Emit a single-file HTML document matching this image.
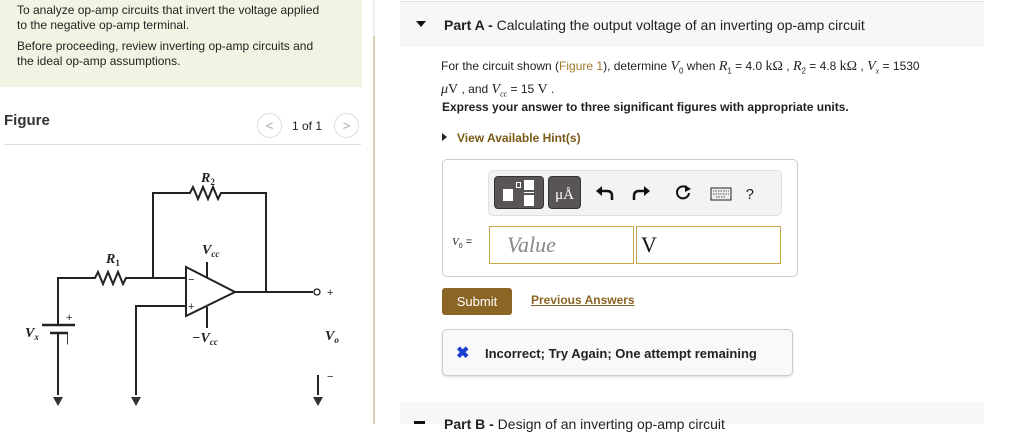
<!DOCTYPE html>
<html><head><meta charset="utf-8">
<style>
*{margin:0;padding:0;box-sizing:border-box}
body{width:1024px;height:424px;overflow:hidden;background:#fff;font-family:"Liberation Sans",Arial,sans-serif;color:#222;position:relative}
.abs{position:absolute}
.intro{left:0;top:0;width:362px;height:87px;background:#f3f3e3;font-size:12px;line-height:15px;padding:3px 0 0 17px;color:#222}
.intro p{margin-bottom:6px}
.serif{font-family:"Liberation Serif",serif;font-style:italic}
</style></head><body>
<div class="abs intro"><p>To analyze op-amp circuits that invert the voltage applied<br>to the negative op-amp terminal.</p><p>Before proceeding, review inverting op-amp circuits and<br>the ideal op-amp assumptions.</p></div>
<div class="abs" style="left:4px;top:112px;font-size:15px;font-weight:bold;color:#333">Figure</div>
<div class="abs" style="left:257px;top:113px;width:25px;height:25px;border:1px solid #ddd;border-radius:50%;color:#aaa;font-size:13px;text-align:center;line-height:23px">&lt;</div>
<div class="abs" style="left:292px;top:119px;font-size:12px;color:#222">1 of 1</div>
<div class="abs" style="left:334px;top:113px;width:25px;height:25px;border:1px solid #ddd;border-radius:50%;color:#aaa;font-size:13px;text-align:center;line-height:23px">&gt;</div>
<div class="abs" style="left:4px;top:144px;width:357px;height:1px;background:#ddd"></div>
<div class="abs" style="left:373px;top:0;width:2px;height:36px;background:#eee"></div>
<div class="abs" style="left:373px;top:36px;width:2px;height:388px;background:#dccdb5"></div>

<svg class="abs" style="left:0;top:150px" width="370" height="274" viewBox="0 150 370 274">
<g fill="none" stroke="#222" stroke-width="2">
<path d="M153 278V193H190l3-6 5 12 5-12 5 12 5-12 5 12 3-6H266V292"/>
<path d="M58 325V278H95l3-6 5 12 5-12 5 12 5-12 5 12 3-6H186"/>
<path d="M186 267V316L235 292Z"/>
<path d="M235 292H313"/>
<path d="M136 395V306H186"/>
<path d="M207 262V278M207 307V328"/>
<path d="M58 333V395M318 375V395"/>
<path d="M42 325H75" stroke-width="2.5"/><path d="M50 333H68" stroke-width="2.5"/>
</g>
<circle cx="317" cy="292" r="3" fill="#fff" stroke="#222" stroke-width="1.3"/>
<g fill="#333"><path d="M53 397H63L58 406Z"/><path d="M131 397H141L136 406Z"/><path d="M313 397H323L318 406Z"/></g>
<g font-family="Liberation Serif,serif" font-style="italic" font-weight="bold" font-size="14" fill="#222">
<text x="201" y="182">R<tspan font-size="9" dy="3" font-style="normal">2</tspan></text>
<text x="106" y="263">R<tspan font-size="9" dy="3" font-style="normal">1</tspan></text>
<text x="202" y="254">V<tspan font-size="9" dy="3">cc</tspan></text>
<text x="192" y="342">−V<tspan font-size="9" dy="3">cc</tspan></text>
<text x="25" y="337">V<tspan font-size="9" dy="3">x</tspan></text>
<text x="325" y="340">V<tspan font-size="9" dy="3">o</tspan></text>
</g>
<g font-family="Liberation Sans,sans-serif" font-size="11" fill="#222">
<text x="188" y="283">−</text><text x="188" y="310">+</text>
<text x="66" y="321">+</text><text x="66" y="342">|</text>
<text x="327" y="296">+</text><text x="327" y="380">−</text>
</g>
</svg>

<div class="abs" style="left:400px;top:1px;width:584px;height:1px;background:#e4e4e4"></div>
<div class="abs" style="left:400px;top:2px;width:584px;height:45px;background:#f7f7f7"></div>
<div class="abs" style="left:416px;top:21px;width:0;height:0;border-left:5px solid transparent;border-right:5px solid transparent;border-top:6px solid #111"></div>
<div class="abs" style="left:444px;top:17px;font-size:14px;color:#222"><b>Part A -</b> Calculating the output voltage of an inverting op-amp circuit</div>
<div class="abs" style="left:441px;top:57px;font-size:12px;line-height:19px;color:#222;width:545px">For the circuit shown (<span style="color:#a0782a">Figure 1</span>), determine <span class="serif" style="font-size:14px">V</span><sub style="font-size:8px">0</sub> when <span class="serif" style="font-size:14px">R</span><sub style="font-size:8px">1</sub> = 4.0 <span style="font-family:'Liberation Serif',serif;font-size:14px">kΩ</span> , <span class="serif" style="font-size:14px">R</span><sub style="font-size:8px">2</sub> = 4.8 <span style="font-family:'Liberation Serif',serif;font-size:14px">kΩ</span> , <span class="serif" style="font-size:14px">V</span><sub style="font-size:8px" class="serif">x</sub> = 1530<br><span style="font-family:'Liberation Serif',serif;font-size:14px"><i>μ</i>V</span> , and <span class="serif" style="font-size:14px">V</span><sub style="font-size:8px" class="serif">cc</sub> = 15 <span style="font-family:'Liberation Serif',serif;font-size:14px">V</span> .</div>
<div class="abs" style="left:442px;top:100px;font-size:12px;font-weight:bold;color:#222">Express your answer to three significant figures with appropriate units.</div>
<div class="abs" style="left:442px;top:133px;width:0;height:0;border-top:4px solid transparent;border-bottom:4px solid transparent;border-left:5px solid #222"></div>
<div class="abs" style="left:457px;top:131px;font-size:12px;font-weight:bold;color:#7a5a16">View Available Hint(s)</div>

<div class="abs" style="left:442px;top:159px;width:356px;height:118px;border:1px solid #ccc;border-radius:5px;background:#fff"></div>
<div class="abs" style="left:488px;top:170px;width:294px;height:46px;border:1px solid #e0e0e0;border-radius:5px;background:#f3f3f3"></div>
<div class="abs" style="left:494px;top:176px;width:50px;height:33px;background:#5a5555;border-radius:4px;border:1px solid #333"></div>
<div class="abs" style="left:503px;top:189px;width:10px;height:12px;background:#fff"></div>
<div class="abs" style="left:516px;top:182px;width:5px;height:6px;border:1px solid #fff"></div>
<div class="abs" style="left:524px;top:180px;width:10px;height:10px;background:#fff"></div>
<div class="abs" style="left:524px;top:192px;width:10px;height:1px;background:#fff"></div>
<div class="abs" style="left:524px;top:195px;width:10px;height:11px;background:#fff"></div>
<div class="abs" style="left:548px;top:176px;width:33px;height:33px;background:#5a5555;border-radius:4px;border:1px solid #333;color:#fff;font-family:'Liberation Serif',serif;font-size:15px;text-align:center;line-height:36px">μÅ</div>
<svg class="abs" style="left:595px;top:183px" width="160" height="22">
<path d="M5 8H12Q17 8 17 13V17" fill="none" stroke="#111" stroke-width="2.5"/><path d="M1 8L7 3V13Z" fill="#111"/>
<path d="M51 8H44Q39 8 39 13V17" fill="none" stroke="#111" stroke-width="2.5"/><path d="M55 8L49 3V13Z" fill="#111"/>
<path d="M93 6A6 6 0 1 0 94 10" fill="none" stroke="#111" stroke-width="2"/><path d="M90 2L96 6L90 9Z" fill="#111"/>
<rect x="116" y="5" width="20" height="12" fill="#eee" stroke="#222" stroke-width="1"/>
<path d="M118 8H134M118 11H134M121 14H131" stroke="#555" stroke-width="1" stroke-dasharray="1.5 1"/>
<text x="159" y="16" font-family="Liberation Sans,sans-serif" font-size="15" fill="#222" text-anchor="end">?</text>
</svg>
<div class="abs" style="left:452px;top:236px;font-size:11px;color:#222"><span class="serif">V</span><sub style="font-size:7px">0</sub> =</div>
<div class="abs" style="left:489px;top:226px;width:145px;height:38px;border:1px solid #c6a84b;background:#fff;font-family:'Liberation Serif',serif;font-style:italic;font-size:22px;color:#888;padding:5px 0 0 17px">Value</div>
<div class="abs" style="left:636px;top:226px;width:145px;height:38px;border:1px solid #c6a84b;background:#fff;font-family:'Liberation Serif',serif;font-size:22px;color:#111;padding:5px 0 0 4px">V</div>

<div class="abs" style="left:442px;top:288px;width:70px;height:27px;background:#8b6523;border-radius:3px;color:#fff;font-size:13px;text-align:center;line-height:27px">Submit</div>
<div class="abs" style="left:531px;top:293px;font-size:12px;font-weight:bold;color:#8b6523;text-decoration:underline">Previous Answers</div>
<div class="abs" style="left:442px;top:329px;width:351px;height:47px;border:1px solid #ccc;border-radius:5px;background:#f9f9f9;box-shadow:0 1px 2px rgba(0,0,0,.15)"></div>
<div class="abs" style="left:456px;top:343px;font-size:16px;font-weight:bold;color:#1a3fd0">✖</div>
<div class="abs" style="left:485px;top:346px;font-size:13px;font-weight:bold;color:#222">Incorrect; Try Again; One attempt remaining</div>

<div class="abs" style="left:400px;top:402px;width:584px;height:22px;background:#f7f7f7"></div>
<div class="abs" style="left:414px;top:421px;width:11px;height:3px;background:#111"></div>
<div class="abs" style="left:444px;top:416px;font-size:14px;color:#222"><b>Part B -</b> Design of an inverting op-amp circuit</div>
</body></html>
